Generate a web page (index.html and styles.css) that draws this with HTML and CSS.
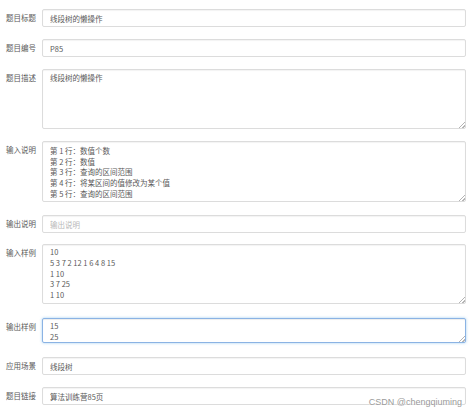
FILE: index.html
```html
<!DOCTYPE html>
<html lang="zh">
<head>
<meta charset="utf-8">
<title>题目编辑</title>
<link rel="stylesheet" href="styles.css">
</head>
<body>
<form class="form">
  <div class="row">
    <label class="label">题目标题</label>
    <input class="control" type="text" value="线段树的懒操作">
  </div>
  <div class="row">
    <label class="label">题目编号</label>
    <input class="control" type="text" value="P85">
  </div>
  <div class="row">
    <label class="label">题目描述</label>
    <div class="field">
      <textarea class="control area h60">线段树的懒操作</textarea>
      <span class="grip"></span>
    </div>
  </div>
  <div class="row gap13">
    <label class="label">输入说明</label>
    <div class="field">
      <textarea class="control area h61 loose">第 1 行：数值个数
第 2 行：数值
第 3 行：查询的区间范围
第 4 行：将某区间的值修改为某个值
第 5 行：查询的区间范围</textarea>
      <span class="grip"></span>
    </div>
  </div>
  <div class="row gap11">
    <label class="label">输出说明</label>
    <input class="control" type="text" placeholder="输出说明">
  </div>
  <div class="row gap14">
    <label class="label">输入样例</label>
    <div class="field">
      <textarea class="control area h60 tight">10
5 3 7 2 12 1 6 4 8 15
1 10
3 7 25
1 10</textarea>
      <span class="grip"></span>
    </div>
  </div>
  <div class="row gap14">
    <label class="label">输出样例</label>
    <div class="field">
      <textarea class="control area h25 focused tight">15
25</textarea>
      <span class="grip"></span>
    </div>
  </div>
  <div class="row">
    <label class="label">应用场景</label>
    <input class="control" type="text" value="线段树">
  </div>
  <div class="row last">
    <label class="label">题目链接</label>
    <input class="control" type="text" value="算法训练营85页">
  </div>
</form>
<div class="watermark">CSDN @chengqiuming</div>
</body>
</html>
```

FILE: styles.css
```css
html, body {
  margin: 0;
  padding: 0;
  background: #ffffff;
}
body {
  position: relative;
  width: 474px;
  height: 414px;
  overflow: hidden;
  font-family: "Noto Sans CJK SC", "Noto Sans", sans-serif;
}
.form {
  display: flex;
  flex-direction: column;
  padding: 9px 8px 0 6px;
}
.row {
  display: flex;
  align-items: flex-start;
  margin-bottom: 12px;
}
.row.gap13 { margin-bottom: 13px; }
.row.gap11 { margin-bottom: 11px; }
.row.gap14 { margin-bottom: 14px; }
.row.last { margin-bottom: 0; }
.label {
  width: 36px;
  flex: none;
  font-size: 7.5px;
  line-height: 18px;
  color: #5a5a5a;
  white-space: nowrap;
}
.field {
  position: relative;
  flex: 1;
  display: flex;
}
.control {
  flex: 1;
  box-sizing: border-box;
  height: 18px;
  margin: 0;
  padding: 0 7px;
  border: 1px solid #dcdcdc;
  border-radius: 2px;
  box-shadow: inset 0 1px 1px rgba(0,0,0,0.05);
  background: #ffffff;
  font-family: "Noto Sans CJK SC", "Noto Sans", sans-serif;
  font-size: 7.5px;
  color: #5a5a5a;
  outline: none;
}
.control::placeholder {
  color: #b8b8b8;
}
.area {
  display: block;
  padding: 3px 7px;
  line-height: 10.6px;
  resize: none;
  overflow: hidden;
}
.area.loose { padding-top: 4px; line-height: 10.7px; }
.area.tight { padding-top: 2px; line-height: 10.8px; }
.h60 { height: 60px; }
.h61 { height: 61px; }
.h25 { height: 25px; }
.focused {
  border-color: #8bb3e4;
  box-shadow: inset 0 1px 1px rgba(0,0,0,0.075), 0 0 3px rgba(102,175,233,0.6);
}
.grip {
  position: absolute;
  right: 1px;
  bottom: 1px;
  width: 6px;
  height: 6px;
  background: linear-gradient(135deg, transparent 0, transparent 46%, #b4b4b4 46%, #b4b4b4 58%, transparent 58%, transparent 72%, #b4b4b4 72%, #b4b4b4 84%, transparent 84%);
  pointer-events: none;
}
.watermark {
  position: absolute;
  right: 12px;
  top: 397px;
  font-family: "Liberation Sans", Arial, sans-serif;
  font-size: 9px;
  color: #9a9a9a;
  text-shadow: 0 0 2px #ffffff, 0 0 1px #ffffff;
  white-space: nowrap;
}
```
